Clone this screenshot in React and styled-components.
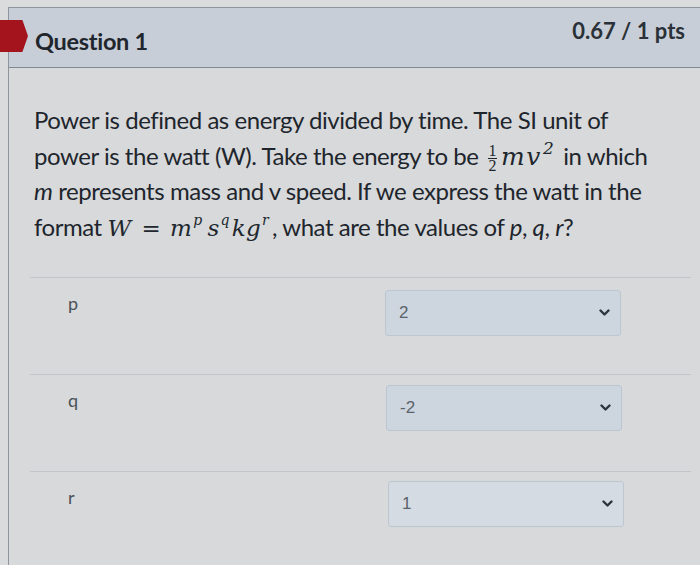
import React from 'react';
import styled, { createGlobalStyle } from 'styled-components';

const Global = createGlobalStyle`
  html, body {
    margin: 0;
    padding: 0;
    background: #dadbdc;
    width: 700px;
    height: 565px;
    overflow: hidden;
  }
  body {
    font-family: Lato, "Noto Sans", sans-serif;
    color: #2d3b45;
  }
`;

const Page = styled.div`
  position: relative;
  padding: 7px 0 0 8px;
`;

const Card = styled.div`
  border-left: 1px solid #8e959c;
  border-top: 1px solid #8e959c;
  background: #d7d9db;
  height: 570px;
`;

const Header = styled.div`
  height: 59px;
  background: #c8ced7;
  border-bottom: 1px solid #808891;
  display: flex;
  justify-content: space-between;
  padding: 0 15px 0 26px;
`;

const Title = styled.h2`
  margin: 19px 0 0;
  font-size: 23.5px;
  font-weight: 700;
  color: #1f262d;
  letter-spacing: -0.3px;
`;

const Points = styled.div`
  margin-top: 9px;
  font-size: 22px;
  font-weight: 700;
  color: #2a3138;
`;

const Flag = styled.div`
  position: absolute;
  left: 0;
  top: 20px;
  width: 28px;
  height: 32px;
  background: #a3141d;
  clip-path: polygon(0 0, 80% 0, 100% 50%, 80% 100%, 0 100%);
`;

const Body = styled.div`
  padding: 34px 0 0 25px;
`;

const Text = styled.p`
  margin: 0;
  font-size: 24px;
  line-height: 35.7px;
  color: #1e252c;
  letter-spacing: -0.45px;
  white-space: nowrap;
`;

const Math = styled.span`
  font-family: "DejaVu Serif", "Liberation Serif", serif;
  font-style: italic;
  font-size: ${p => p.$size || 23}px;
  line-height: 0;
  letter-spacing: ${p => p.$track || 0.3}px;
  margin: 0 ${p => p.$gap || 0}px 0 0;
  color: #20272e;
`;

const Up = styled.sup`
  font-size: ${p => p.$size || 14}px;
  vertical-align: 11px;
  line-height: 0;
  margin: 0 ${p => p.$after || 0}px 0 1px;
`;

const Frac = styled.span`
  display: inline-block;
  vertical-align: -6px;
  font-family: "Liberation Serif", serif;
  font-size: 16px;
  line-height: 12px;
  text-align: center;
  margin: 0 4px 0 9px;
`;

const Num = styled.span`
  display: block;
  border-bottom: 1px solid #1e252c;
  padding: 0 1px 1px;
`;

const Den = styled.span`
  display: block;
  padding-top: 1px;
`;

const Plain = styled.span`
  font-style: normal;
  margin: 0 9px 0 10px;
`;

const Answers = styled.div`
  margin: 32px 0 0 21px;
  width: 661px;
`;

const Row = styled.div`
  border-top: 1px solid #c2c6ca;
  height: 96px;
  display: flex;
  align-items: flex-start;
`;

const Label = styled.div`
  box-sizing: border-box;
  width: 355px;
  padding: 14px 0 0 38px;
  font-size: 18px;
  color: #4a5158;
`;

const Select = styled.div`
  margin-top: ${p => p.$top}px;
  margin-left: ${p => p.$shift}px;
  width: 236px;
  height: 46px;
  box-sizing: border-box;
  border: 1px solid #bcc7d2;
  border-radius: 3px;
  background: ${p => p.$bg};
  display: flex;
  align-items: center;
  justify-content: space-between;
  padding: 0 10px 0 13px;
  font-family: "Liberation Sans", Arial, sans-serif;
  font-size: 17px;
  color: #5a636b;
`;

const Chevron = () => (
  <svg width="11" height="8" viewBox="0 0 11 8">
    <path d="M1.5 1.5 L5.5 5.5 L9.5 1.5" fill="none" stroke="#2b3540" strokeWidth="2.4" strokeLinecap="round" strokeLinejoin="round" />
  </svg>
);

const rows = [
  { label: 'p', value: '2', top: 12, shift: 0, bg: '#cdd5df' },
  { label: 'q', value: '-2', top: 10, shift: 1, bg: '#cdd5df' },
  { label: 'r', value: '1', top: 9, shift: 3, bg: '#d5dbe2' },
];

export default function App() {
  return (
    <>
      <Global />
      <Page>
        <Flag />
        <Card>
          <Header>
            <Title>Question 1</Title>
            <Points>0.67 / 1 pts</Points>
          </Header>
          <Body>
            <Text>
              Power is defined as energy divided by time. The SI unit of
              <br />
              power is the watt (W). Take the energy to be
              <Frac><Num>1</Num><Den>2</Den></Frac>
              <Math $size={25} $track={1.5} $gap={8}>mv<Up $size={17}>2</Up></Math>in which
              <br />
              <i>m</i> represents mass and v speed. If we express the watt in the
              <br />
              format <Math $gap={3}>W<Plain>=</Plain>m<Up $after={5}>p</Up>s<Up $after={2}>q</Up>kg<Up>r</Up></Math>, what are the values of <i>p</i>, <i>q</i>, <i>r</i>?
            </Text>
          </Body>
          <Answers>
            {rows.map(r => (
              <Row key={r.label}>
                <Label>{r.label}</Label>
                <Select $top={r.top} $shift={r.shift} $bg={r.bg}>
                  <span>{r.value}</span>
                  <Chevron />
                </Select>
              </Row>
            ))}
          </Answers>
        </Card>
      </Page>
    </>
  );
}
